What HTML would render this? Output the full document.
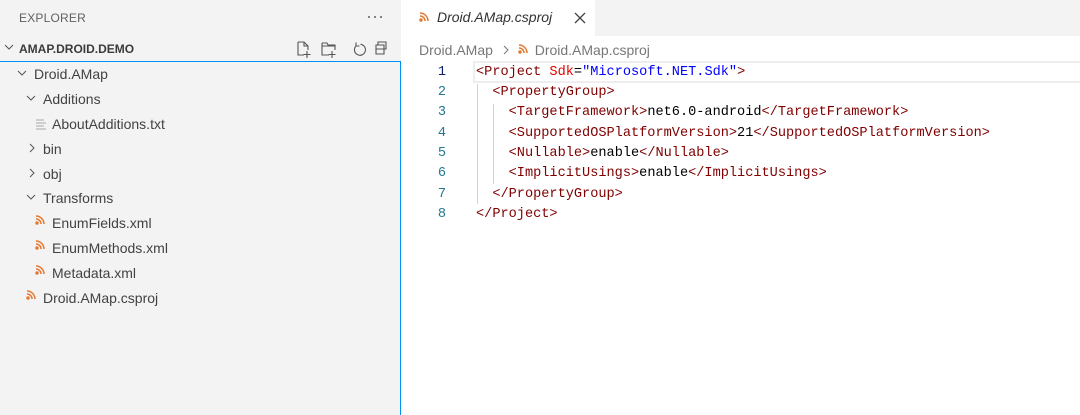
<!DOCTYPE html>
<html><head><meta charset="utf-8"><style>
*{margin:0;padding:0;box-sizing:border-box}
body{width:1080px;height:415px;overflow:hidden;background:#fff;font-family:"Liberation Sans",sans-serif;position:relative}
.side{position:absolute;left:0;top:0;width:401px;height:415px;background:#f3f3f3}
.title{position:absolute;left:19px;top:11px;font-size:12px;color:#616161;letter-spacing:.2px}
.hdr{position:absolute;left:0;top:38px;width:400px;height:22px}
.hdr .t{position:absolute;left:19px;top:4px;font-size:12px;font-weight:bold;color:#3b3b3b}
.list{position:absolute;left:0;top:61px;width:401px;height:354px;border-top:1px solid #0090f1;border-right:1px solid #0090f1}
.row{position:absolute;font-size:14px;color:#424242;height:20px;line-height:20px}
.tabs{position:absolute;left:401px;top:0;width:679px;height:36px;background:#f3f3f3}
.tab{position:absolute;left:0;top:0;width:194px;height:36px;background:#fff}
.tab .n{position:absolute;left:36px;top:9px;font-size:14px;font-style:italic;color:#333}
.bc{position:absolute;left:419px;top:42px;font-size:14px;color:#777}
.ln{position:absolute;left:401px;width:45px;text-align:right;font-family:"Liberation Mono",monospace;font-size:13.6px;color:#237893}
.code{position:absolute;left:476px;font-family:"Liberation Mono",monospace;font-size:13.6px;white-space:pre;color:#000}
.t1{color:#800000}.a{color:#e50000}.s{color:#0000ff}
.cur{position:absolute;left:473px;top:61px;width:607px;height:22px;border:2px solid #eee;border-right:none}
.guide{position:absolute;width:1px;background:#d3d3d3}
</style></head><body>
<div class="side">
<div class="title">EXPLORER</div>
<svg style="position:absolute;left:367px;top:15px" width="18" height="4" fill="#616161"><circle cx="2" cy="2" r="1"/><circle cx="8" cy="2" r="1"/><circle cx="14" cy="2" r="1"/></svg>
<div class="hdr"><span class="t">AMAP.DROID.DEMO</span>
<svg style="position:absolute;left:296px;top:2px" width="100" height="20" fill="none" stroke="#555" stroke-width="1.1">
<path d="M2 2h6l4 4v4M2 2v13h6M8 2v4h4M11 11v7M7.5 14.5h7"/>
<path d="M26 3h5l1 2h7v5M26 3v12h7M26 6h13M36 11v7M32.5 14.5h7"/>
<path d="M60.5 5.5a5.5 5.5 0 1 0 4 -1.2M60 2.5v3.5h3.5"/>
<path d="M88 9h2v-7h-8v3M82 5h6v9h-8v-9zM80 9h8"/>
</svg></div>
<div class="list"></div>
<svg style="position:absolute;left:0;top:0" width="60" height="310" fill="none" stroke="#555" stroke-width="1">
<path d="M5 45l4 4 4-4"/>
<path d="M18 71l4 4 4-4"/>
<path d="M27 96l4 4 4-4"/>
<path d="M30 144l4 4-4 4"/>
<path d="M30 169l4 4-4 4"/>
<path d="M27 195l4 4 4-4"/>
<path d="M36 120h8M36 123h10M36 126h8M36 129h10" stroke="#aaa"/>
</svg>
<div class="row" style="left:34px;top:64px">Droid.AMap</div>
<div class="row" style="left:43px;top:89px">Additions</div>
<div class="row" style="left:52px;top:114px">AboutAdditions.txt</div>
<div class="row" style="left:43px;top:139px">bin</div>
<div class="row" style="left:43px;top:164px">obj</div>
<div class="row" style="left:43px;top:188px">Transforms</div>
<div class="row" style="left:52px;top:213px">EnumFields.xml</div>
<div class="row" style="left:52px;top:238px">EnumMethods.xml</div>
<div class="row" style="left:52px;top:263px">Metadata.xml</div>
<div class="row" style="left:43px;top:288px">Droid.AMap.csproj</div>
<svg style="position:absolute;left:0;top:0" width="60" height="310" fill="none" stroke="#e37933" stroke-width="1.5">
<g transform="translate(0,0)"><path d="M36 219a5 5 0 0 1 5 5M36 216a8 8 0 0 1 8 8"/><circle cx="37" cy="223" r="1" fill="#e37933"/></g>
<g transform="translate(0,25)"><path d="M36 219a5 5 0 0 1 5 5M36 216a8 8 0 0 1 8 8"/><circle cx="37" cy="223" r="1" fill="#e37933"/></g>
<g transform="translate(0,50)"><path d="M36 219a5 5 0 0 1 5 5M36 216a8 8 0 0 1 8 8"/><circle cx="37" cy="223" r="1" fill="#e37933"/></g>
<g transform="translate(-9,75)"><path d="M36 219a5 5 0 0 1 5 5M36 216a8 8 0 0 1 8 8"/><circle cx="37" cy="223" r="1" fill="#e37933"/></g>
</svg>
</div>
<div class="tabs"><div class="tab">
<svg style="position:absolute;left:17px;top:12px" width="14" height="14" fill="none" stroke="#e37933" stroke-width="1.5"><path d="M2 4a5 5 0 0 1 5 5M2 1a8 8 0 0 1 8 8"/><circle cx="3" cy="8" r="1" fill="#e37933"/></svg>
<span class="n">Droid.AMap.csproj</span>
<svg style="position:absolute;left:173px;top:12px" width="12" height="12" stroke="#444" stroke-width="1.3"><path d="M1 1l10 10M11 1l-10 10"/></svg></div></div>
<div class="bc">Droid.AMap <svg width="10" height="12" fill="none" stroke="#777" stroke-width="1" style="margin:0 6px 0 4px;vertical-align:-1px"><path d="M3 2l4 4-4 4"/></svg><svg width="14" height="12" fill="none" stroke="#e37933" stroke-width="1.5" style="vertical-align:-1px"><path d="M2 4a5 5 0 0 1 5 5M2 1a8 8 0 0 1 8 8"/><circle cx="3" cy="8" r="1" fill="#e37933"/></svg> Droid.AMap.csproj</div>
<div class="cur"></div>
<div class="guide" style="left:477px;top:84px;height:120px"></div>
<div class="guide" style="left:493px;top:104px;height:80px"></div>
<div class="ln" style="top:65px;color:#0b216f">1</div>
<div class="ln" style="top:85px">2</div>
<div class="ln" style="top:105px">3</div>
<div class="ln" style="top:126px">4</div>
<div class="ln" style="top:146px">5</div>
<div class="ln" style="top:166px">6</div>
<div class="ln" style="top:187px">7</div>
<div class="ln" style="top:207px">8</div>
<div class="code" style="top:65px"><span class="t1">&lt;Project </span><span class="a">Sdk</span>=<span class="s">"Microsoft.NET.Sdk"</span><span class="t1">&gt;</span></div>
<div class="code" style="top:85px"><span class="t1">  &lt;PropertyGroup&gt;</span></div>
<div class="code" style="top:105px"><span class="t1">    &lt;TargetFramework&gt;</span>net6.0-android<span class="t1">&lt;/TargetFramework&gt;</span></div>
<div class="code" style="top:126px"><span class="t1">    &lt;SupportedOSPlatformVersion&gt;</span>21<span class="t1">&lt;/SupportedOSPlatformVersion&gt;</span></div>
<div class="code" style="top:146px"><span class="t1">    &lt;Nullable&gt;</span>enable<span class="t1">&lt;/Nullable&gt;</span></div>
<div class="code" style="top:166px"><span class="t1">    &lt;ImplicitUsings&gt;</span>enable<span class="t1">&lt;/ImplicitUsings&gt;</span></div>
<div class="code" style="top:187px"><span class="t1">  &lt;/PropertyGroup&gt;</span></div>
<div class="code" style="top:207px"><span class="t1">&lt;/Project&gt;</span></div>
</body></html>
